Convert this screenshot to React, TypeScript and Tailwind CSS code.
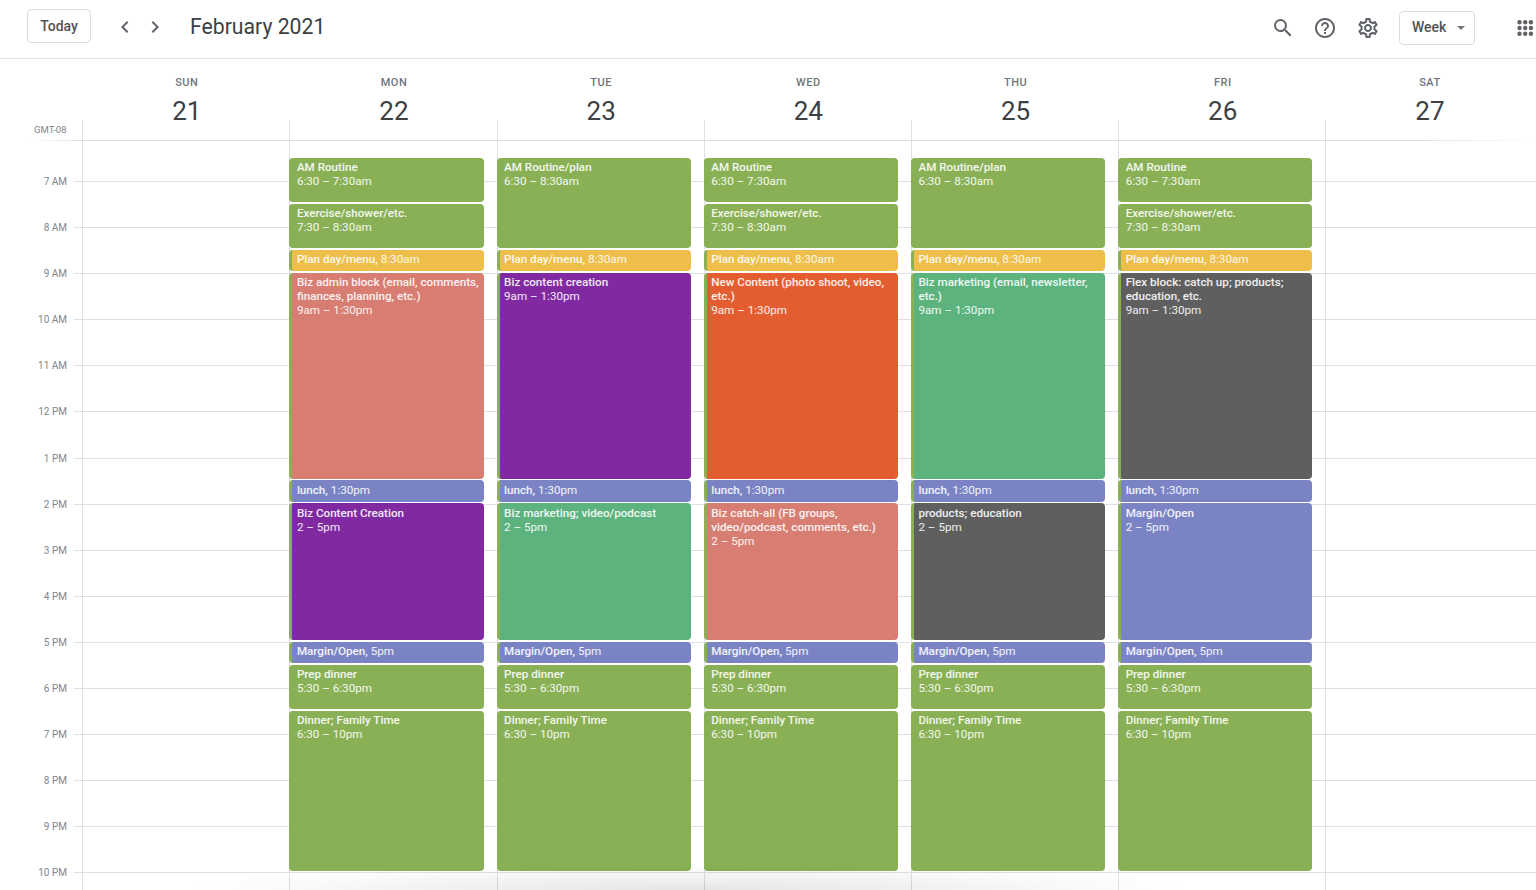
import { MdChevronLeft, MdChevronRight, MdSearch, MdHelpOutline, MdOutlineSettings } from "react-icons/md";

const hours = ["7 AM", "8 AM", "9 AM", "10 AM", "11 AM", "12 PM", "1 PM", "2 PM", "3 PM", "4 PM", "5 PM", "6 PM", "7 PM", "8 PM", "9 PM", "10 PM"];
const days = [
  { name: "SUN", date: 21 },
  { name: "MON", date: 22 },
  { name: "TUE", date: 23 },
  { name: "WED", date: 24 },
  { name: "THU", date: 25 },
  { name: "FRI", date: 26 },
  { name: "SAT", date: 27 },
];

const GREEN = "bg-[#89b055]";
const YELLOW = "bg-[#edbf4a]";
const SALMON = "bg-[#d77d72]";
const PURPLE = "bg-[#8029a0]";
const BLUE = "bg-[#7a84c5]";
const MINT = "bg-[#5cb37e]";
const ORANGE = "bg-[#e35d31]";
const GRAY = "bg-[#5f5f5f]";

const HOUR = "h-[44.5px]";
const HALF = "h-[21.5px]";
const TWO = "h-[90.6px]";
const MORNING = "h-[205.85px]";
const AFTERNOON = "h-[136.7px]";
const EVENING = "h-[159.75px]";

type Ev = { title: string; time: string; color: string; size: string; inline?: boolean };

const routine: Ev[] = [
  { title: "AM Routine", time: "6:30 – 7:30am", color: GREEN, size: HOUR },
  { title: "Exercise/shower/etc.", time: "7:30 – 8:30am", color: GREEN, size: HOUR },
];
const routinePlan: Ev[] = [{ title: "AM Routine/plan", time: "6:30 – 8:30am", color: GREEN, size: TWO }];
const plan: Ev = { title: "Plan day/menu,", time: "8:30am", color: YELLOW, size: HALF, inline: true };
const lunch: Ev = { title: "lunch,", time: "1:30pm", color: BLUE, size: HALF, inline: true };
const evening: Ev[] = [
  { title: "Margin/Open,", time: "5pm", color: BLUE, size: HALF, inline: true },
  { title: "Prep dinner", time: "5:30 – 6:30pm", color: GREEN, size: HOUR },
  { title: "Dinner; Family Time", time: "6:30 – 10pm", color: GREEN, size: EVENING },
];

function week(first: Ev[], block: [string, string], afternoon: [string, string]): Ev[] {
  return [
    ...first,
    plan,
    { title: block[0], time: "9am – 1:30pm", color: block[1], size: MORNING },
    lunch,
    { title: afternoon[0], time: "2 – 5pm", color: afternoon[1], size: AFTERNOON },
    ...evening,
  ];
}

const schedule: Ev[][] = [
  [],
  week(routine, ["Biz admin block (email, comments, finances, planning, etc.)", SALMON], ["Biz Content Creation", PURPLE]),
  week(routinePlan, ["Biz content creation", PURPLE], ["Biz marketing; video/podcast", MINT]),
  week(routine, ["New Content (photo shoot, video, etc.)", ORANGE], ["Biz catch-all (FB groups, video/podcast, comments, etc.)", SALMON]),
  week(routinePlan, ["Biz marketing (email, newsletter, etc.)", MINT], ["products; education", GRAY]),
  week(routine, ["Flex block: catch up; products; education, etc.", GRAY], ["Margin/Open", BLUE]),
  [],
];

function EventCard({ ev }: { ev: Ev }) {
  return (
    <div className={`${ev.color} ${ev.size} w-[194.2px] shrink-0 overflow-hidden rounded-[4px] border-l-[3.5px] border-[#89b055] pl-[4.5px] pr-[2px] pt-[2.5px] text-[11.65px] leading-[14px] text-white/90`}>
      {ev.inline ? (
        <div className="truncate">
          <span className="font-medium">{ev.title}</span> {ev.time}
        </div>
      ) : (
        <>
          <div className="font-medium">{ev.title}</div>
          <div>{ev.time}</div>
        </>
      )}
    </div>
  );
}

export default function App() {
  return (
    <div className="relative h-[890px] w-[1536px] overflow-hidden bg-white font-['Roboto',sans-serif]">
      {/* Top bar */}
      <header className="flex h-[59px] items-center border-b border-[#dfe0e5] pl-[27px] pb-[6px] text-[#5f6368]">
        <button className="h-[34px] w-[64px] rounded-[4px] border border-[#dadce0] text-[14px] font-medium text-[#4f5357]">Today</button>
        <MdChevronLeft className="ml-[22px] mt-[1px] text-[24px]" />
        <MdChevronRight className="ml-[6px] mt-[1px] text-[24px]" />
        <h1 className="ml-[23px] mt-[1px] text-[21.2px] leading-[28px] text-[#3c4043]">February 2021</h1>
        <div className="ml-auto mt-[3px] flex items-center">
          <MdSearch className="text-[24px]" />
          <MdHelpOutline className="ml-[18px] text-[24px]" />
          <MdOutlineSettings className="ml-[19px] text-[24px]" />
          <button className="ml-[19px] flex h-[34px] w-[76px] items-center rounded-[4px] border border-[#dadce0] pl-[12px] text-[14px] font-medium text-[#4f5357]">
            Week
            <span className="ml-[11px] h-0 w-0 border-x-[4px] border-t-[4px] border-x-transparent border-t-[#70757a]" />
          </button>
          <svg viewBox="0 0 24 24" className="ml-[37px] h-[24px] w-[24px] fill-[#5f6368]">
            <circle cx="7.5" cy="6.3" r="2.2" />
            <circle cx="13.2" cy="6.3" r="2.2" />
            <circle cx="18.9" cy="6.3" r="2.2" />
            <circle cx="7.5" cy="12" r="2.2" />
            <circle cx="13.2" cy="12" r="2.2" />
            <circle cx="18.9" cy="12" r="2.2" />
            <circle cx="7.5" cy="17.7" r="2.2" />
            <circle cx="13.2" cy="17.7" r="2.2" />
            <circle cx="18.9" cy="17.7" r="2.2" />
          </svg>
        </div>
      </header>

      {/* Day headings */}
      <div className="grid h-[61px] grid-cols-[82.2px_repeat(7,207.2px)]">
        <div />
        {days.map((d) => (
          <div key={d.name} className="flex flex-col items-center pl-[2px] pt-[17px]">
            <div className="text-[11px] font-medium leading-[13px] tracking-[0.5px] text-[#70757a]">{d.name}</div>
            <div className="mt-[7px] text-[26px] leading-[30px] text-[#3c4043]">{d.date}</div>
          </div>
        ))}
      </div>

      {/* All-day strip */}
      <div className="grid h-[20px] grid-cols-[82.2px_repeat(7,207.2px)]">
        <div className="pt-[4px] pl-[34px] text-[9.5px] leading-[12px] text-[#80868b]">GMT-08</div>
        {days.map((d) => (
          <div key={d.name} className="border-l border-[#dfe0e5]" />
        ))}
      </div>
      <div className="h-px bg-[linear-gradient(to_right,transparent_28px,#dfe0e5_82px,#dfe0e5_1420px,transparent_1536px)]" />

      {/* Time grid */}
      <div className="relative h-[749px]">
        <div className="pt-[40px]">
          {hours.map((h) => (
            <div key={h} className="flex h-[46.1px]">
              <div className="-mt-[6px] h-[14px] w-[67px] text-right text-[10px] leading-[14px] text-[#80868b]">{h}</div>
              <div className="ml-[7px] h-px flex-1 bg-[#dfe0e5]" />
            </div>
          ))}
        </div>
        <div className="absolute inset-0 grid grid-cols-[82.2px_repeat(7,207.2px)]">
          <div />
          {schedule.map((events, i) => (
            <div key={i} className="border-l border-[#dfe0e5]">
              <div className="-ml-px flex flex-col gap-[1.6px] pt-[16.6px]">
                {events.map((ev, j) => (
                  <EventCard key={j} ev={ev} />
                ))}
              </div>
            </div>
          ))}
        </div>
      </div>

      {/* Soft shadow along the bottom edge */}
      <div className="pointer-events-none absolute bottom-0 left-[180px] h-[26px] w-[1020px] bg-[radial-gradient(ellipse_at_bottom,rgba(0,0,0,0.1),transparent_70%)]" />
    </div>
  );
}
